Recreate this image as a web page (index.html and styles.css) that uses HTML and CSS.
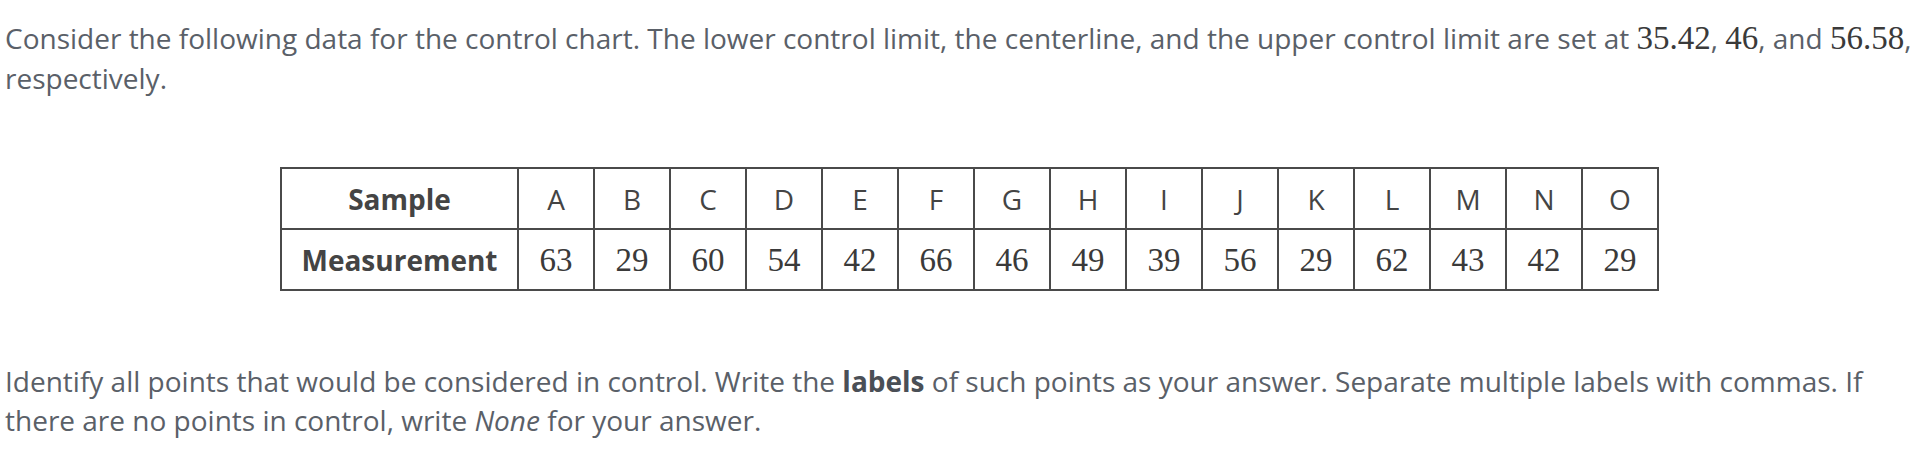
FILE: index.html
```html
<!DOCTYPE html>
<html>
<head>
<meta charset="utf-8">
<link rel="stylesheet" href="styles.css">
</head>
<body>
<div class="page">
  <p class="para">Consider the following data for the control chart. The lower control limit, the centerline, and the upper control limit are set at <span class="math">35.42</span>, <span class="math">46</span>, and <span class="math">56.58</span>, respectively.</p>
  <div class="table-wrap">
    <table class="data">
      <colgroup>
        <col class="col-head">
        <col class="col-cell"><col class="col-cell"><col class="col-cell"><col class="col-cell"><col class="col-cell"><col class="col-cell"><col class="col-cell"><col class="col-cell"><col class="col-cell"><col class="col-cell"><col class="col-cell"><col class="col-cell"><col class="col-cell"><col class="col-cell"><col class="col-cell">
      </colgroup>
      <tr>
        <th class="rowhead">Sample</th>
        <td>A</td><td>B</td><td>C</td><td>D</td><td>E</td><td>F</td><td>G</td><td>H</td><td>I</td><td>J</td><td>K</td><td>L</td><td>M</td><td>N</td><td>O</td>
      </tr>
      <tr>
        <th class="rowhead">Measurement</th>
        <td class="num">63</td><td class="num">29</td><td class="num">60</td><td class="num">54</td><td class="num">42</td><td class="num">66</td><td class="num">46</td><td class="num">49</td><td class="num">39</td><td class="num">56</td><td class="num">29</td><td class="num">62</td><td class="num">43</td><td class="num">42</td><td class="num">29</td>
      </tr>
    </table>
  </div>
  <p class="para">Identify all points that would be considered in control. Write the <b>labels</b> of such points as your answer. Separate multiple labels with commas. If there are no points in control, write <i>None</i> for your answer.</p>
</div>
</body>
</html>
```
FILE: styles.css
```css
html, body {
  margin: 0;
  padding: 0;
  background: #ffffff;
}
.page {
  padding: 17px 6px 0 5px;
  font-family: "Open Sans", "Liberation Sans", sans-serif;
  font-size: 28px;
  line-height: 39px;
  color: #5a6068;
}
.para {
  margin: 0;
}
.para b {
  color: #4a4f56;
}
.math {
  font-family: "Liberation Serif", serif;
  font-size: 33px;
  line-height: 42px;
  color: #3a3a3a;
}
.table-wrap {
  display: flex;
  padding: 69px 0 0 275px;
  margin-bottom: 71px;
}
.data {
  border-collapse: collapse;
  table-layout: fixed;
  width: 1379px;
  color: #444;
}
.col-head {
  width: 237px;
}
.col-cell {
  width: 76px;
}
.data th, .data td {
  border: 2px solid #4a4a4a;
  height: 59px;
  padding: 0;
  text-align: center;
  font-size: 28px;
  line-height: 38px;
}
.data .rowhead {
  font-weight: 700;
}
.data .num {
  font-family: "Liberation Serif", serif;
  font-size: 33px;
  color: #3a3a3a;
}
```
